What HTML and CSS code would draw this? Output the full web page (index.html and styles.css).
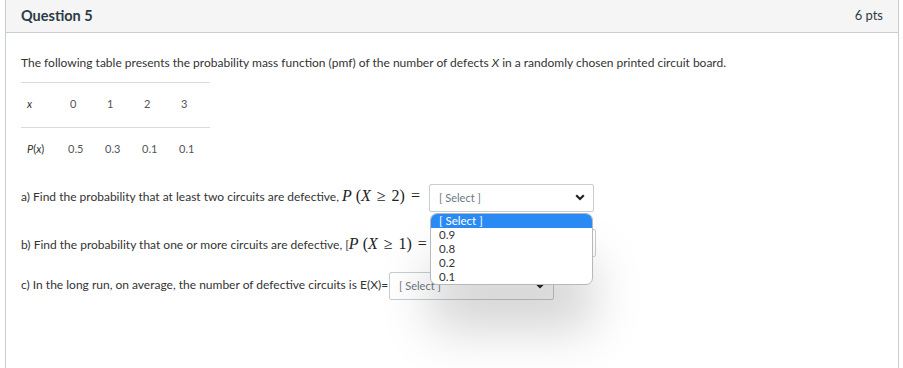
FILE: index.html
```html
<!DOCTYPE html>
<html>
<head>
<meta charset="utf-8">
<link rel="stylesheet" href="styles.css">
</head>
<body>
<div class="card">
  <div class="header">
    <span class="title">Question 5</span>
    <span class="pts">6 pts</span>
  </div>
  <div class="body">
    <p class="intro">The following table presents the probability mass function (pmf) of the number of defects <i>X</i> in a randomly chosen printed circuit board.</p>
    <table class="pmf">
      <tr class="r1"><td class="c1"><i>x</i></td><td>0</td><td>1</td><td>2</td><td>3</td></tr>
      <tr class="r2"><td class="c1"><i>P</i>(<i>x</i>)</td><td>0.5</td><td>0.3</td><td>0.1</td><td>0.1</td></tr>
    </table>
    <p class="q">a) Find the probability that at least two circuits are defective, <span class="math"><i>P</i> (<i>X</i> <span class="op">≥</span> 2) <span class="op">=</span></span> <span class="sel-wrap"><span class="sel">[ Select ]<svg class="chev" width="10" height="7" viewBox="0 0 10 7"><path d="M1.2 1.2 L5 5 L8.8 1.2" fill="none" stroke="#222" stroke-width="2.2"/></svg></span><span class="dropdown"><span class="opt active">[ Select ]</span><span class="opt">0.9</span><span class="opt">0.8</span><span class="opt">0.2</span><span class="opt">0.1</span></span></span></p>
    <p class="q b">b) Find the probability that one or more circuits are defective, [<span class="math"><i>P</i> (<i>X</i> <span class="op">≥</span> 1) <span class="op">=</span></span><span class="sel">[ Select ]<svg class="chev" width="10" height="7" viewBox="0 0 10 7"><path d="M1.2 1.2 L5 5 L8.8 1.2" fill="none" stroke="#222" stroke-width="2.2"/></svg></span></p>
    <p class="q c">c) In the long run, on average, the number of defective circuits is E(X)=<span class="sel">[ Select ]<svg class="chev" width="10" height="7" viewBox="0 0 10 7"><path d="M1.2 1.2 L5 5 L8.8 1.2" fill="none" stroke="#222" stroke-width="2.2"/></svg></span></p>
  </div>
</div>
</body>
</html>
```
FILE: styles.css
```css
html, body {
  margin: 0;
  padding: 0;
  background: #fff;
}
body {
  font-family: Lato, "Liberation Sans", sans-serif;
  color: #2d3b45;
  overflow: hidden;
}
.card {
  margin-left: 5px;
  width: 892px;
  height: 400px;
  border: 1px solid #c7cdd1;
  border-top: none;
}
.header {
  height: 32px;
  background: #f5f5f5;
  border-bottom: 1px solid #c7cdd1;
  display: flex;
  align-items: center;
  justify-content: space-between;
  padding: 0 15px;
}
.title {
  font-size: 14.5px;
  font-weight: 700;
  color: #2d3b45;
  margin-top: -2px;
}
.pts {
  font-size: 13px;
  color: #2d3b45;
  margin-top: -2px;
}
.body {
  padding: 21px 15px 0 15px;
}
.intro {
  margin: 0;
  font-size: 12px;
  line-height: 18px;
  color: #333;
}
.pmf {
  border-collapse: collapse;
  margin-top: 10px;
  width: 187px;
  table-layout: fixed;
  font-size: 11px;
  color: #555;
}
.pmf td {
  border-top: 1px solid #d8dcdf;
  height: 40px;
  padding: 0 0 4px 6px;
  text-align: left;
  vertical-align: middle;
  width: 31px;
  box-sizing: content-box;
}
.pmf td.c1 { width: 35px; color: #333; }
.pmf .r1 td:not(.c1) { text-indent: 2px; }
.q {
  margin: 0 0 17px 0;
  font-size: 12px;
  height: 28px;
  line-height: 28px;
  white-space: nowrap;
  position: relative;
  color: #333;
}
.pmf + .q { margin-top: 10px; }
.q.b { margin-top: 20px; }
.q.c { margin-top: -4px; }
.q.b .sel { margin-left: 2px; position: relative; top: -3px; }
.q.c .sel { margin-left: 1px; }
.math {
  font-family: "Liberation Serif", "DejaVu Serif", serif;
  font-size: 16px;
  color: #222;
}
.math .op { margin: 0 2px; }
.sel-wrap {
  position: relative;
  display: inline-block;
  vertical-align: middle;
  line-height: 0;
}
.sel {
  display: inline-flex;
  align-items: center;
  justify-content: space-between;
  box-sizing: border-box;
  width: 165px;
  height: 28px;
  line-height: 28px;
  border: 1px solid #c7cdd1;
  border-radius: 2px;
  background: #fff;
  padding: 0 8px 0 9px;
  font-size: 11px;
  color: #6b7780;
  vertical-align: middle;
  margin-left: 4px;
}
.dropdown {
  position: absolute;
  left: 5px;
  top: 29px;
  width: 163px;
  box-sizing: border-box;
  background: #fff;
  border: 1px solid #b5b9bd;
  border-radius: 7px;
  overflow: hidden;
  z-index: 5;
  display: flex;
  flex-direction: column;
  box-shadow: 0 45px 50px rgba(0, 0, 0, 0.17);
}
.opt {
  display: block;
  height: 14px;
  line-height: 14px;
  padding-left: 8px;
  font-size: 11.5px;
  color: #333;
}
.opt.active {
  background: #2a8af3;
  color: #fff;
}
```
